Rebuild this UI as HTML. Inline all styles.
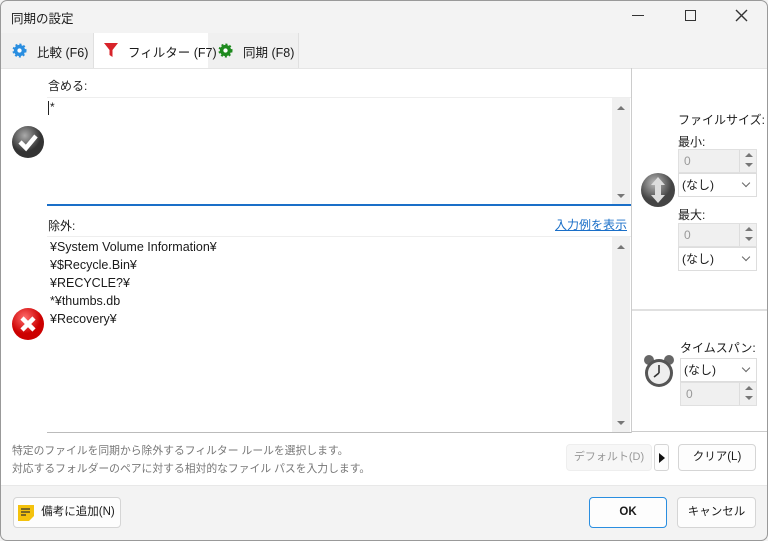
<!DOCTYPE html>
<html><head><meta charset="utf-8"><style>
*{box-sizing:border-box;margin:0;padding:0}
body{width:768px;height:541px;overflow:hidden;background:#f3f3f3;font-family:"Liberation Sans","Noto Sans CJK JP",sans-serif;font-size:12px;color:#1a1a1a;position:relative}
.a{position:absolute}
.btn{position:absolute;background:#fdfdfd;border:1px solid #d5d5d5;border-radius:4px;text-align:center;font-size:11.5px}
.inp{position:absolute;background:#f0f0f0;border:1px solid #e0e0e0;color:#999;padding-left:5px;line-height:22px}
.sel{position:absolute;background:#fff;border:1px solid #ddd;padding-left:3px;line-height:22px}
.sel:after{content:"";position:absolute;right:7px;top:6px;width:5px;height:5px;border-right:1px solid #666;border-bottom:1px solid #666;transform:rotate(45deg)}
.spin{position:absolute;width:17px;background:#f0f0f0;border-left:1px solid #ddd}
.up,.dn{position:absolute;left:5px;width:0;height:0;border-left:4px solid transparent;border-right:4px solid transparent}
.up{border-bottom:4px solid #777}.dn{border-top:4px solid #777}
</style></head><body>
<div class="a" style="left:0;top:0;width:768px;height:541px;border:1px solid #999;border-radius:7px;pointer-events:none;z-index:9"></div>
<div class="a" style="left:11px;top:8px;font-size:12.5px">同期の設定</div>
<div class="a" style="left:632px;top:15px;width:12px;height:1px;background:#333"></div>
<div class="a" style="left:685px;top:10px;width:11px;height:11px;border:1.5px solid #333"></div>
<svg class="a" style="left:735px;top:9px" width="13" height="13" viewBox="0 0 13 13"><path d="M1 1L12 12M12 1L1 12" stroke="#333" stroke-width="1.4"/></svg>
<!-- tabs -->
<div class="a" style="left:0;top:33px;width:94px;height:35px;background:#f0f0f0;border-right:1px solid #e0e0e0"></div>
<div class="a" style="left:94px;top:33px;width:114px;height:36px;background:#fff"></div>
<div class="a" style="left:208px;top:33px;width:91px;height:35px;background:#f0f0f0;border-right:1px solid #e0e0e0"></div>
<svg class="a" style="left:12px;top:43px" width="15" height="15" viewBox="0 0 16 16"><circle cx="8" cy="8" r="6" fill="#2a8ee0" stroke="#2a8ee0" stroke-width="3" stroke-dasharray="2 2"/><circle cx="8" cy="8" r="2.3" fill="#fff"/></svg>
<div class="a" style="left:37px;top:42px;font-size:12.5px">比較 (F6)</div>
<svg class="a" style="left:104px;top:42px" width="14" height="16" viewBox="0 0 14 16"><path d="M0 1H14L8.5 8V15L5.5 13V8Z" fill="#d8232a"/></svg>
<div class="a" style="left:128px;top:42px;font-size:12.5px">フィルター (F7)</div>
<svg class="a" style="left:218px;top:43px" width="15" height="15" viewBox="0 0 16 16"><circle cx="8" cy="8" r="6" fill="#1f8a1f" stroke="#1f8a1f" stroke-width="3" stroke-dasharray="2 2"/><circle cx="8" cy="8" r="2.3" fill="#fff"/></svg>
<div class="a" style="left:243px;top:42px;font-size:12.5px">同期 (F8)</div>
<!-- content -->
<div class="a" style="left:0;top:68px;width:768px;height:417px;background:#fff;border-top:1px solid #e5e5e5"></div>
<div class="a" style="left:631px;top:68px;width:1px;height:365px;background:#ccc"></div>
<div class="a" style="left:632px;top:309px;width:136px;height:2px;background:#e0e0e0"></div>
<div class="a" style="left:632px;top:431px;width:136px;height:1px;background:#ccc"></div>
<div class="a" style="left:48px;top:77px">含める:</div>
<div class="a" style="left:47px;top:97px;width:584px;height:109px;border-top:1px solid #eee;border-bottom:2px solid #1a6fc8"></div>
<div class="a" style="left:48px;top:101px;width:1px;height:14px;background:#222"></div>
<div class="a" style="left:50px;top:100px">*</div>
<div class="a" style="left:612px;top:98px;width:18px;height:106px;background:#f0f0f0"></div>
<div class="a up" style="left:617px;top:106px"></div><div class="a dn" style="left:617px;top:194px"></div>
<svg class="a" style="left:11px;top:125px" width="34" height="34" viewBox="0 0 34 34"><defs><radialGradient id="g1" cx="0.4" cy="0.3"><stop offset="0" stop-color="#aaa"/><stop offset="1" stop-color="#333"/></radialGradient></defs><circle cx="17" cy="17" r="16" fill="url(#g1)"/><path d="M9 17L15 23L25 11" stroke="#fff" stroke-width="4.5" fill="none"/></svg>
<div class="a" style="left:48px;top:217px">除外:</div>
<div class="a" style="left:555px;top:216px;color:#1a6fc8;text-decoration:underline">入力例を表示</div>
<div class="a" style="left:47px;top:236px;width:584px;height:197px;border-top:1px solid #eee;border-bottom:1px solid #bbb"></div>
<div class="a" style="left:612px;top:237px;width:18px;height:195px;background:#f0f0f0"></div>
<div class="a up" style="left:617px;top:245px"></div><div class="a dn" style="left:617px;top:421px"></div>
<div class="a" style="left:50px;top:238px;line-height:18px;font-size:12.5px">¥System Volume Information¥<br>¥$Recycle.Bin¥<br>¥RECYCLE?¥<br>*¥thumbs.db<br>¥Recovery¥</div>
<svg class="a" style="left:11px;top:307px" width="34" height="34" viewBox="0 0 34 34"><defs><radialGradient id="g2" cx="0.4" cy="0.3"><stop offset="0" stop-color="#ff6b6b"/><stop offset="1" stop-color="#c00"/></radialGradient></defs><circle cx="17" cy="17" r="16" fill="url(#g2)"/><path d="M11 11L23 23M23 11L11 23" stroke="#fff" stroke-width="4.5"/></svg>
<!-- right panel -->
<div class="a" style="left:678px;top:111px">ファイルサイズ:</div>
<div class="a" style="left:678px;top:133px">最小:</div>
<div class="inp" style="left:678px;top:149px;width:79px;height:24px">0</div>
<div class="spin" style="left:739px;top:150px;height:22px"><div class="up" style="top:3px"></div><div class="dn" style="top:13px"></div></div>
<div class="sel" style="left:678px;top:173px;width:79px;height:24px">(なし)</div>
<svg class="a" style="left:640px;top:172px" width="36" height="36" viewBox="0 0 36 36"><defs><radialGradient id="g3" cx="0.4" cy="0.3"><stop offset="0" stop-color="#bbb"/><stop offset="1" stop-color="#444"/></radialGradient></defs><circle cx="18" cy="18" r="17" fill="url(#g3)"/><path d="M18 5L25 13H21V23H25L18 31L11 23H15V13H11Z" fill="#ddd"/></svg>
<div class="a" style="left:678px;top:206px">最大:</div>
<div class="inp" style="left:678px;top:223px;width:79px;height:24px">0</div>
<div class="spin" style="left:739px;top:224px;height:22px"><div class="up" style="top:3px"></div><div class="dn" style="top:13px"></div></div>
<div class="sel" style="left:678px;top:247px;width:79px;height:24px">(なし)</div>
<div class="a" style="left:680px;top:339px">タイムスパン:</div>
<div class="sel" style="left:680px;top:358px;width:77px;height:24px">(なし)</div>
<div class="inp" style="left:680px;top:382px;width:77px;height:24px">0</div>
<div class="spin" style="left:739px;top:383px;height:22px"><div class="up" style="top:3px"></div><div class="dn" style="top:13px"></div></div>
<svg class="a" style="left:641px;top:352px" width="36" height="38" viewBox="0 0 36 38"><circle cx="8" cy="8" r="5" fill="#666"/><circle cx="28" cy="8" r="5" fill="#666"/><circle cx="18" cy="21" r="14" fill="#555"/><circle cx="18" cy="21" r="11" fill="#eee"/><path d="M18 21V13M18 21L13 25" stroke="#333" stroke-width="1.6"/></svg>
<!-- description -->
<div class="a" style="left:12px;top:442px;color:#777;line-height:18px;font-size:10.8px">特定のファイルを同期から除外するフィルター ルールを選択します。<br>対応するフォルダーのペアに対する相対的なファイル パスを入力します。</div>
<div class="btn" style="left:566px;top:444px;width:86px;height:27px;line-height:25px;color:#999;background:#f7f7f7;border-color:#eee;font-size:11px">デフォルト(D)</div>
<div class="btn" style="left:654px;top:444px;width:15px;height:27px;border-radius:3px"><div class="a" style="left:4px;top:8px;border-top:5px solid transparent;border-bottom:5px solid transparent;border-left:6px solid #111"></div></div>
<div class="btn" style="left:678px;top:444px;width:78px;height:27px;line-height:25px">クリア(L)</div>
<!-- bottom -->
<div class="a" style="left:0;top:485px;width:768px;height:1px;background:#e8e8e8"></div>
<div class="btn" style="left:13px;top:497px;width:108px;height:31px;line-height:29px;padding-left:22px">備考に追加(N)</div>
<svg class="a" style="left:18px;top:505px" width="16" height="16" viewBox="0 0 16 16"><path d="M0 0H16V11L11 16H0Z" fill="#f4c20d"/><path d="M3 4H12M3 7H12M3 10H8" stroke="#333" stroke-width="1.2"/></svg>
<div class="btn" style="left:589px;top:497px;width:78px;height:31px;line-height:29px;font-weight:bold;border:1.5px solid #2a8ee0">OK</div>
<div class="btn" style="left:677px;top:497px;width:79px;height:31px;line-height:29px">キャンセル</div>
</body></html>
